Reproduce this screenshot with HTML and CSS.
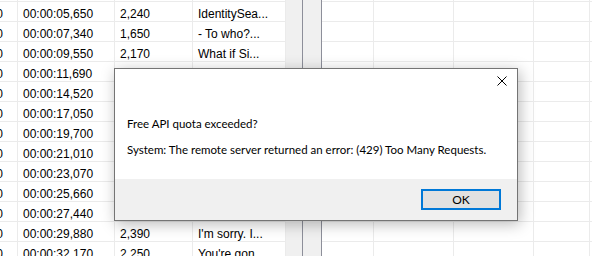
FILE: index.html
```html
<!DOCTYPE html>
<html>
<head>
<meta charset="utf-8">
<link rel="stylesheet" href="styles.css">
</head>
<body>
<div class="sheet">
  <div class="pane-left">
    <div class="rows">
      <div class="row"><div class="c">00:00:03,410</div><div class="c">00:00:03,410</div><div class="c">2,100</div><div class="c">Previous...</div></div>
      <div class="row"><div class="c">00:00:05,650</div><div class="c">00:00:05,650</div><div class="c">2,240</div><div class="c">IdentitySea...</div></div>
      <div class="row"><div class="c">00:00:07,340</div><div class="c">00:00:07,340</div><div class="c">1,650</div><div class="c">- To who?...</div></div>
      <div class="row"><div class="c">00:00:09,550</div><div class="c">00:00:09,550</div><div class="c">2,170</div><div class="c">What if Si...</div></div>
      <div class="row"><div class="c">00:00:11,690</div><div class="c">00:00:11,690</div><div class="c">2,830</div><div class="c">She's...</div></div>
      <div class="row"><div class="c">00:00:14,520</div><div class="c">00:00:14,520</div><div class="c">2,530</div><div class="c">I know...</div></div>
      <div class="row"><div class="c">00:00:17,050</div><div class="c">00:00:17,050</div><div class="c">2,650</div><div class="c">Maybe...</div></div>
      <div class="row"><div class="c">00:00:19,700</div><div class="c">00:00:19,700</div><div class="c">1,310</div><div class="c">Why...</div></div>
      <div class="row"><div class="c">00:00:21,010</div><div class="c">00:00:21,010</div><div class="c">2,060</div><div class="c">Because...</div></div>
      <div class="row"><div class="c">00:00:23,070</div><div class="c">00:00:23,070</div><div class="c">2,590</div><div class="c">Then...</div></div>
      <div class="row"><div class="c">00:00:25,660</div><div class="c">00:00:25,660</div><div class="c">1,780</div><div class="c">Wait...</div></div>
      <div class="row"><div class="c">00:00:27,440</div><div class="c">00:00:27,440</div><div class="c">2,440</div><div class="c">No...</div></div>
      <div class="row"><div class="c">00:00:29,880</div><div class="c">00:00:29,880</div><div class="c">2,390</div><div class="c">I'm sorry. I...</div></div>
      <div class="row"><div class="c">00:00:32,170</div><div class="c">00:00:32,170</div><div class="c">2,250</div><div class="c">You're gon...</div></div>
    </div>
  </div>
  <div class="splitter"><div class="split-a"></div><div class="split-b"></div></div>
  <div class="pane-right">
    <div class="rows">
      <div class="row r"><div class="c"></div><div class="c"></div><div class="c"></div><div class="c"></div><div class="c"></div></div>
      <div class="row r"><div class="c"></div><div class="c"></div><div class="c"></div><div class="c"></div><div class="c"></div></div>
      <div class="row r"><div class="c"></div><div class="c"></div><div class="c"></div><div class="c"></div><div class="c"></div></div>
      <div class="row r"><div class="c"></div><div class="c"></div><div class="c"></div><div class="c"></div><div class="c"></div></div>
      <div class="row r"><div class="c"></div><div class="c"></div><div class="c"></div><div class="c"></div><div class="c"></div></div>
      <div class="row r"><div class="c"></div><div class="c"></div><div class="c"></div><div class="c"></div><div class="c"></div></div>
      <div class="row r"><div class="c"></div><div class="c"></div><div class="c"></div><div class="c"></div><div class="c"></div></div>
      <div class="row r"><div class="c"></div><div class="c"></div><div class="c"></div><div class="c"></div><div class="c"></div></div>
      <div class="row r"><div class="c"></div><div class="c"></div><div class="c"></div><div class="c"></div><div class="c"></div></div>
      <div class="row r"><div class="c"></div><div class="c"></div><div class="c"></div><div class="c"></div><div class="c"></div></div>
      <div class="row r"><div class="c"></div><div class="c"></div><div class="c"></div><div class="c"></div><div class="c"></div></div>
      <div class="row r"><div class="c"></div><div class="c"></div><div class="c"></div><div class="c"></div><div class="c"></div></div>
      <div class="row r"><div class="c"></div><div class="c"></div><div class="c"></div><div class="c"></div><div class="c"></div></div>
      <div class="row r"><div class="c"></div><div class="c"></div><div class="c"></div><div class="c"></div><div class="c"></div></div>
    </div>
  </div>
</div>

<div class="dialog">
  <div class="titlebar">
    <div class="close">
      <svg width="10" height="10" viewBox="0 0 10 10"><path d="M0.5 0.5 L9.5 9.5 M9.5 0.5 L0.5 9.5" stroke="#000" stroke-width="1" fill="none"/></svg>
    </div>
  </div>
  <div class="message">
    <p>Free API quota exceeded?</p>
    <p>System: The remote server returned an error: (429) Too Many Requests.</p>
  </div>
  <div class="footer">
    <div class="btn">OK</div>
  </div>
</div>
</body>
</html>
```

FILE: styles.css
```css
html, body {
  margin: 0;
  padding: 0;
  background: #ffffff;
  width: 592px;
  height: 256px;
  overflow: hidden;
}

.sheet {
  display: flex;
  height: 256px;
  font-family: "Liberation Sans", Arial, sans-serif;
  font-size: 12px;
  color: #000;
}

.pane-left {
  width: 286px;
  overflow: hidden;
  flex: none;
}

.rows {
  margin-top: -18px;
}

.pane-left .rows {
  margin-left: -79px;
}

.row {
  display: grid;
  grid-template-columns: 97px 97px 78px 93px;
}

.row.r {
  grid-template-columns: 52px 80px 80px 56px 60px;
}

.c {
  box-sizing: border-box;
  height: 20px;
  padding: 5px 0 0 5px;
  line-height: 14px;
  border-right: 1px solid #ebebeb;
  border-bottom: 1px solid #ebebeb;
  white-space: nowrap;
  overflow: hidden;
}

.pane-left .row .c:first-child {
  text-align: right;
  padding: 5px 14px 0 0;
  overflow: visible;
}

.splitter {
  display: flex;
  flex: none;
  width: 36px;
  background: #f0f0f0;
}

.split-a {
  box-sizing: border-box;
  width: 17px;
  border-right: 1px solid #8d8f9a;
}

.split-b {
  box-sizing: border-box;
  width: 19px;
  border-right: 1px solid #8d8f9a;
}

.pane-right {
  flex: 1;
  overflow: hidden;
}

.dialog {
  position: absolute;
  left: 114px;
  top: 68px;
  width: 404px;
  height: 153px;
  box-sizing: border-box;
  border: 1px solid #747474;
  background: #ffffff;
  box-shadow: 2px 3px 14px rgba(0, 0, 0, 0.28);
  display: flex;
  flex-direction: column;
  font-family: Lato, "Noto Sans", sans-serif;
  font-size: 11.5px;
  color: #000;
}

.titlebar {
  height: 30px;
  display: flex;
  justify-content: flex-end;
  align-items: flex-start;
  flex: none;
}

.close {
  width: 10px;
  height: 10px;
  margin: 7px 10px 0 0;
}

.close svg {
  display: block;
}

.message {
  flex: 1;
  padding: 17px 12px 0;
}

.message p {
  margin: 0 0 10px;
  line-height: 16px;
  white-space: nowrap;
}

.footer {
  height: 41px;
  flex: none;
  background: #f0f0f0;
  display: flex;
  justify-content: flex-end;
  align-items: flex-start;
}

.btn {
  box-sizing: border-box;
  width: 80px;
  height: 21px;
  margin: 10px 16px 0 0;
  border: 2px solid #0078d7;
  background: #e1e1e1;
  text-align: center;
  line-height: 17px;
  font-size: 12px;
}
```
